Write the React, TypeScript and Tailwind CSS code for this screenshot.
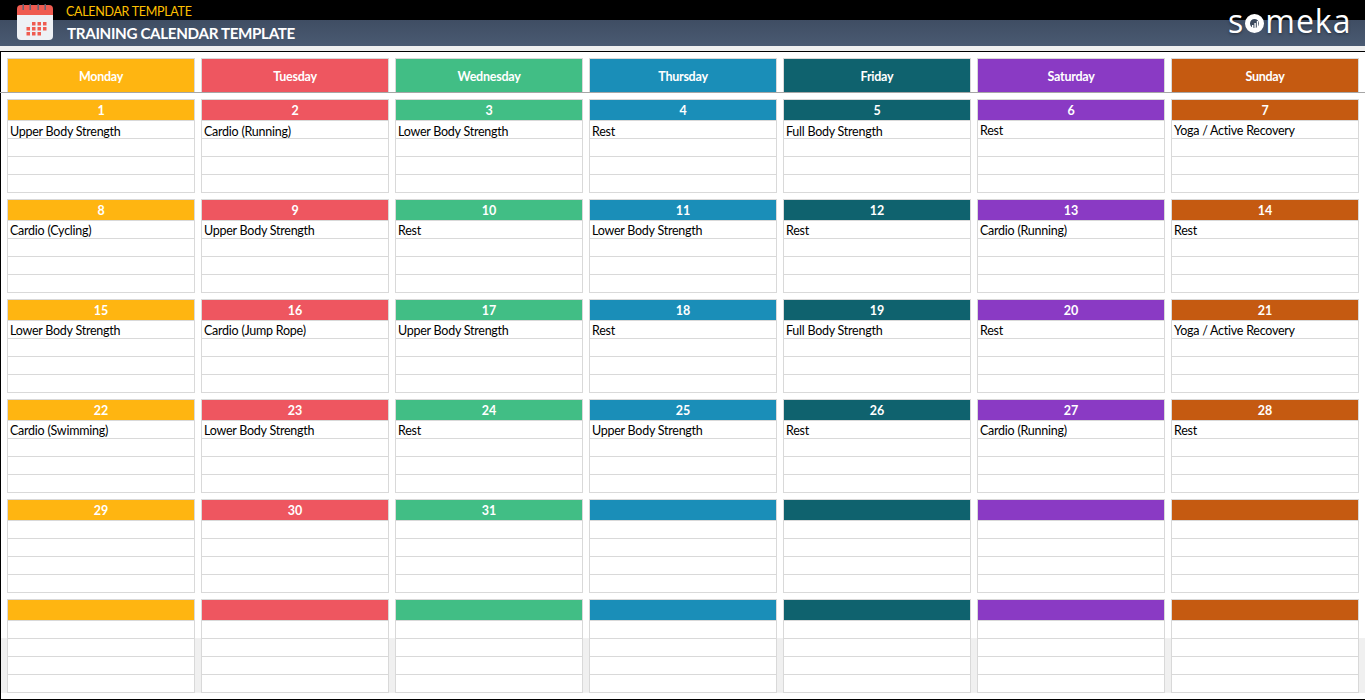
const days = [
  { name: "Monday", color: "bg-[#ffb511]" },
  { name: "Tuesday", color: "bg-[#ee5660]" },
  { name: "Wednesday", color: "bg-[#41be85]" },
  { name: "Thursday", color: "bg-[#1a8eb8]" },
  { name: "Friday", color: "bg-[#0f626e]" },
  { name: "Saturday", color: "bg-[#8a3ac4]" },
  { name: "Sunday", color: "bg-[#c55a11]" },
];

const weeks = [
  [
    ["1", "Upper Body Strength"],
    ["2", "Cardio (Running)"],
    ["3", "Lower Body Strength"],
    ["4", "Rest"],
    ["5", "Full Body Strength"],
    ["6", "Rest"],
    ["7", "Yoga / Active Recovery"],
  ],
  [
    ["8", "Cardio (Cycling)"],
    ["9", "Upper Body Strength"],
    ["10", "Rest"],
    ["11", "Lower Body Strength"],
    ["12", "Rest"],
    ["13", "Cardio (Running)"],
    ["14", "Rest"],
  ],
  [
    ["15", "Lower Body Strength"],
    ["16", "Cardio (Jump Rope)"],
    ["17", "Upper Body Strength"],
    ["18", "Rest"],
    ["19", "Full Body Strength"],
    ["20", "Rest"],
    ["21", "Yoga / Active Recovery"],
  ],
  [
    ["22", "Cardio (Swimming)"],
    ["23", "Lower Body Strength"],
    ["24", "Rest"],
    ["25", "Upper Body Strength"],
    ["26", "Rest"],
    ["27", "Cardio (Running)"],
    ["28", "Rest"],
  ],
  [["29", ""], ["30", ""], ["31", ""], ["", ""], ["", ""], ["", ""], ["", ""]],
  [["", ""], ["", ""], ["", ""], ["", ""], ["", ""], ["", ""], ["", ""]],
];

const CalendarIcon = () => {
  const dots = [
    [32, 22], [37.5, 22], [43, 22],
    [26.5, 27], [32, 27], [37.5, 27], [43, 27],
    [26.5, 32], [32, 32], [37.5, 32],
  ];
  return (
    <svg className="absolute left-0 top-0" width="70" height="46" viewBox="0 0 70 46">
      <path d="M17 15 V9 a4 4 0 0 1 4 -4 H49 a4 4 0 0 1 4 4 V15 Z" fill="#ef5b50" />
      <path d="M17 15 H53 V36 a4 4 0 0 1 -4 4 H21 a4 4 0 0 1 -4 -4 Z" fill="#eef1f5" />
      {[23, 30, 38, 45].map((x) => (
        <rect key={x} x={x - 0.5} y="4" width="1.4" height="6" fill="#5a6478" />
      ))}
      {dots.map(([x, y]) => (
        <rect key={`${x}-${y}`} x={x} y={y} width="3.5" height="3.5" fill="#ef5b50" />
      ))}
    </svg>
  );
};

const Logo = () => (
  <div className="absolute left-[1228px] top-0 flex h-[46px] items-center text-[32px] font-medium leading-none text-white font-['Open_Sans',sans-serif] [text-shadow:0_1px_3px_rgba(0,0,0,0.45)]">
    <span className="-mt-[5px] flex items-center tracking-[1px]">
      s
      <span className="relative mx-[1px] mt-[6px] flex h-[19px] w-[19px] items-center justify-center rounded-full border-[5px] border-white bg-[#3c4a5e]">
        <svg width="8" height="8" viewBox="0 0 8 8">
          <rect x="1" y="5" width="1.4" height="3" fill="#fff" />
          <rect x="3.4" y="3" width="1.4" height="5" fill="#fff" />
          <rect x="5.8" y="1" width="1.4" height="7" fill="#fff" />
        </svg>
      </span>
      meka
    </span>
  </div>
);

const DayCell = ({
  num,
  text,
  color,
  nudge,
}: {
  num: string;
  text: string;
  color: string;
  nudge: boolean;
}) => (
  <div className="flex w-[188px] flex-col border border-[#d9d9d9] bg-white">
    <div className={`flex h-[20px] items-center justify-center pt-[2px] text-[12.5px] font-bold text-white ${color}`}>
      {num}
    </div>
    <div className={`h-[18px] truncate border-t border-[#d9d9d9] pl-[2px] text-[12.5px] tracking-[-0.25px] text-black ${nudge ? "leading-[22px]" : "leading-[20px]"}`}>
      {text}
    </div>
    <div className="h-[18px] border-t border-[#d9d9d9]" />
    <div className="h-[18px] border-t border-[#d9d9d9]" />
    <div className="h-[18px] border-t border-[#d9d9d9]" />
  </div>
);

export default function App() {
  return (
    <div className="relative flex h-[700px] w-[1365px] flex-col overflow-hidden bg-white font-['Lato',sans-serif]">
      <div className="flex h-[20px] shrink-0 items-center bg-black pl-[66px] pt-[4px] text-[12.5px] tracking-[-0.3px] text-[#ffc000]">
        CALENDAR TEMPLATE
      </div>
      <div className="flex h-[26px] shrink-0 items-center bg-gradient-to-b from-[#3f4d63] to-[#4a5a72] pl-[67px] text-[15.2px] font-bold tracking-[-0.35px] text-white">
        TRAINING CALENDAR TEMPLATE
      </div>
      <div className="h-[5px] shrink-0 bg-[#f0f0f0]" />
      <CalendarIcon />
      <Logo />

      <div className="flex flex-1 flex-col border-b border-l border-t border-black">
        <div className="-ml-px mt-[6px] flex gap-[6px] border-b border-[#a6a6a6] pl-[7px]">
          {days.map((d) => (
            <div
              key={d.name}
              className="w-[188px] border-x border-t border-[#d9d9d9]"
            >
              <div className={`flex h-[33px] items-center justify-center pt-[4px] text-[12.5px] font-bold tracking-[-0.25px] text-white ${d.color}`}>
                {d.name}
              </div>
            </div>
          ))}
        </div>
        <div className="mt-[6px] flex flex-col gap-[6px]">
          {weeks.map((week, w) => (
            <div
              key={w}
              className={`flex gap-[6px] pl-[6px] ${
                w === 5
                  ? "bg-[linear-gradient(to_bottom,transparent_39px,#f0f0f0_39px)]"
                  : ""
              }`}
            >
              {week.map(([num, text], i) => (
                <DayCell
                  key={i}
                  num={num}
                  text={text}
                  color={days[i].color}
                  nudge={w === 0 && i < 5}
                />
              ))}
            </div>
          ))}
        </div>
      </div>
    </div>
  );
}
